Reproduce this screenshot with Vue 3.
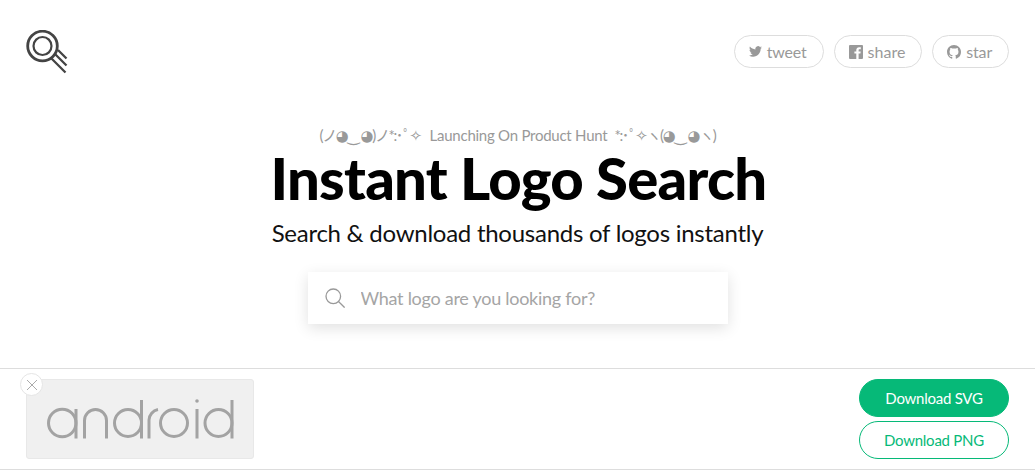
<template>
  <div class="page">
    <header class="top">
      <svg class="brand" width="42" height="44" viewBox="0 0 42 44" fill="none" stroke="#444">
        <circle cx="16.500" cy="16" r="14.800" stroke-width="2.800" />
        <circle cx="16.500" cy="16" r="9" stroke-width="2.200" />
        <path d="M32 20 40.500 28.500M28.500 23.500 40.500 35.500M24.500 27.500 39.500 42.500" stroke-width="2.300" />
      </svg>
      <nav class="social">
        <a class="pill">
          <svg width="13" height="11" viewBox="0 0 24 20" fill="#999">
            <path d="M24 2.400c-.9.4-1.800.7-2.800.8 1-.6 1.800-1.600 2.200-2.700-1 .6-2 1-3.100 1.200A4.900 4.900 0 0 0 11.900 6.200C7.800 6 4.200 4 1.700.9c-1.300 2.200-.7 5.100 1.500 6.600-.8 0-1.600-.2-2.200-.6 0 2.300 1.600 4.400 3.900 4.900-.7.200-1.500.2-2.200.1.600 2 2.400 3.400 4.600 3.400A9.900 9.900 0 0 1 0 17.300 14 14 0 0 0 7.500 19.500c9.100 0 14.300-7.700 14-14.600 1-.7 1.800-1.600 2.500-2.500z" />
          </svg>
          tweet
        </a>
        <a class="pill pill--share">
          <svg width="14" height="14" viewBox="0 0 14 14">
            <path fill="#999" d="M1 0h12a1 1 0 0 1 1 1v12a1 1 0 0 1-1 1H9.600V8.600h1.800l.3-2.100H9.600V5.200c0-.6.200-1 1-1h1.200V2.300c-.2 0-.9-.1-1.700-.1-1.700 0-2.800 1-2.800 2.900v1.400H5.400v2.100h1.900V14H1a1 1 0 0 1-1-1V1a1 1 0 0 1 1-1z" />
          </svg>
          share
        </a>
        <a class="pill">
          <svg width="14" height="14" viewBox="0 0 16 16" fill="#999">
            <path d="M8 0C3.580 0 0 3.580 0 8c0 3.540 2.290 6.530 5.470 7.590.4.070.55-.17.55-.38 0-.19-.01-.82-.01-1.490-2.010.37-2.530-.49-2.690-.94-.09-.23-.48-.94-.82-1.130-.28-.15-.68-.52-.01-.53.63-.01 1.080.58 1.230.82.720 1.210 1.870.87 2.330.66.070-.52.280-.87.510-1.070-1.780-.2-3.640-.89-3.640-3.950 0-.87.310-1.590.820-2.150-.08-.2-.36-1.020.08-2.120 0 0 .67-.21 2.200.82.640-.18 1.320-.27 2-.27s1.360.09 2 .27c1.530-1.040 2.200-.82 2.200-.82.44 1.100.16 1.920.08 2.120.51.560.82 1.270.82 2.150 0 3.070-1.870 3.750-3.650 3.950.29.250.54.730.54 1.480 0 1.070-.01 1.930-.01 2.200 0 .21.150.46.550.38A8.010 8.010 0 0 0 16 8c0-4.420-3.580-8-8-8z" />
          </svg>
          star
        </a>
      </nav>
    </header>

    <main class="hero">
      <p class="launch">
        <span class="kao">(ノ◕‿ ◕)ノ*:･ﾟ✧</span>
        <span class="launch-text">Launching On Product Hunt</span>
        <span class="kao">*:･ﾟ✧ヽ(◕‿ ◕ヽ)</span>
      </p>
      <h1>Instant Logo Search</h1>
      <p class="sub">Search &amp; download thousands of logos instantly</p>
      <div class="search">
        <svg width="20" height="20" viewBox="0 0 20 20" fill="none" stroke="#999" stroke-width="1.300">
          <circle cx="8.300" cy="8.300" r="7.300" />
          <path d="M13.500 13.500 19.600 19.600" />
        </svg>
        <input type="text" placeholder="What logo are you looking for?" />
      </div>
    </main>

    <section class="result">
      <div class="preview">
        <button class="close" aria-label="close">
          <svg width="12" height="12" viewBox="0 0 12 12" stroke="#aaa" stroke-width="1">
            <path d="M1 1 11 11M11 1 1 11" />
          </svg>
        </button>
        <svg class="mark" width="190" height="42" viewBox="0 -2 190 42" fill="none" stroke="#a3a3a3" stroke-width="3" role="img" aria-label="android">
          <circle cx="16.250" cy="23" r="13.750" />
          <path d="M30 9v29.500" />
          <path d="M38.500 38.500V20.500a11 11 0 0 1 22 0V38.500" />
          <circle cx="82" cy="23" r="13.500" />
          <path d="M95.500 0v38.500" />
          <path d="M103 38.500V20a11 11 0 0 1 9-10.500" />
          <circle cx="128" cy="23" r="13.500" />
          <path d="M151 9v29.500" />
          <circle cx="151" cy="1" r="1.800" fill="#a3a3a3" stroke="none" />
          <circle cx="172.500" cy="23" r="13.500" />
          <path d="M186 0v38.500" />
        </svg>
      </div>
      <div class="actions">
        <a class="dl dl--solid">Download SVG</a>
        <a class="dl">Download PNG</a>
      </div>
    </section>
  </div>
</template>

<script setup>
</script>

<style>
html,
body {
  margin: 0;
  background: #fff;
  overflow: hidden;
}
</style>

<style scoped>
.page {
  width: 1035px;
  height: 470px;
  font-family: Lato, "DejaVu Sans", "Noto Sans CJK JP", sans-serif;
  display: flex;
  flex-direction: column;
  box-sizing: border-box;
}

.top {
  display: flex;
  justify-content: space-between;
  padding: 30px 26px 0;
  height: 95px;
  box-sizing: border-box;
}

.social {
  display: flex;
  gap: 10px;
  padding-top: 5px;
  align-items: flex-start;
}

.pill {
  height: 33px;
  box-sizing: border-box;
  padding: 0 16px 0 14px;
  border: 1px solid #ddd;
  border-radius: 17px;
  display: flex;
  align-items: center;
  gap: 5px;
  color: #999;
  font-size: 16px;
  letter-spacing: -0.2px;
}

.pill--share {
  letter-spacing: 0;
}

.hero {
  flex: 1;
  display: flex;
  flex-direction: column;
  align-items: center;
}

.launch {
  margin: 31px 0 0;
  display: flex;
  font-size: 15px;
  line-height: 18px;
  letter-spacing: -0.25px;
  color: #999;
  white-space: pre;
}

.kao {
  letter-spacing: -1.400px;
}

.launch-text {
  margin: 0 7px 0 9px;
}

h1 {
  margin: 5px 0 0 2px;
  font-size: 58px;
  line-height: 58px;
  letter-spacing: -0.75px;
  font-weight: 900;
  color: #000;
}

.sub {
  margin: 11px 0 0;
  font-size: 24px;
  line-height: 30px;
  letter-spacing: -0.26px;
  color: #111;
}

.search {
  margin-top: 24px;
  width: 420px;
  height: 52px;
  box-sizing: border-box;
  padding-left: 17px;
  display: flex;
  align-items: center;
  gap: 16px;
  background: #fff;
  box-shadow: 0 4px 14px rgba(0, 0, 0, 0.12);
}

.search input {
  flex: 1;
  border: 0;
  outline: 0;
  padding: 0;
  font: 18px Lato, sans-serif;
  letter-spacing: -0.27px;
  background: transparent;
}

.search input::placeholder {
  color: #a5a5a5;
  opacity: 1;
}

.result {
  height: 102px;
  box-sizing: border-box;
  border-top: 1px solid #ddd;
  border-bottom: 1px solid #ddd;
  display: flex;
  justify-content: space-between;
  align-items: center;
  padding: 0 26px;
}

.preview {
  position: relative;
  width: 228px;
  height: 80px;
  box-sizing: border-box;
  background: #f0f0f0;
  border: 1px solid #e8e8e8;
  border-radius: 3px;
  display: flex;
  align-items: center;
  justify-content: center;
}

.mark {
  margin-left: 2px;
}

.close {
  position: absolute;
  left: -7px;
  top: -7px;
  width: 23px;
  height: 23px;
  padding: 0;
  border: 1px solid #e5e5e5;
  border-radius: 50%;
  background: #fff;
  display: flex;
  align-items: center;
  justify-content: center;
}

.actions {
  display: flex;
  flex-direction: column;
  gap: 4px;
}

.dl {
  width: 150px;
  height: 38px;
  box-sizing: border-box;
  border: 1px solid #06b978;
  border-radius: 19px;
  color: #06b978;
  font-size: 15px;
  letter-spacing: -0.25px;
  display: flex;
  align-items: center;
  justify-content: center;
}

.dl--solid {
  background: #06b978;
  color: #fff;
}
</style>
